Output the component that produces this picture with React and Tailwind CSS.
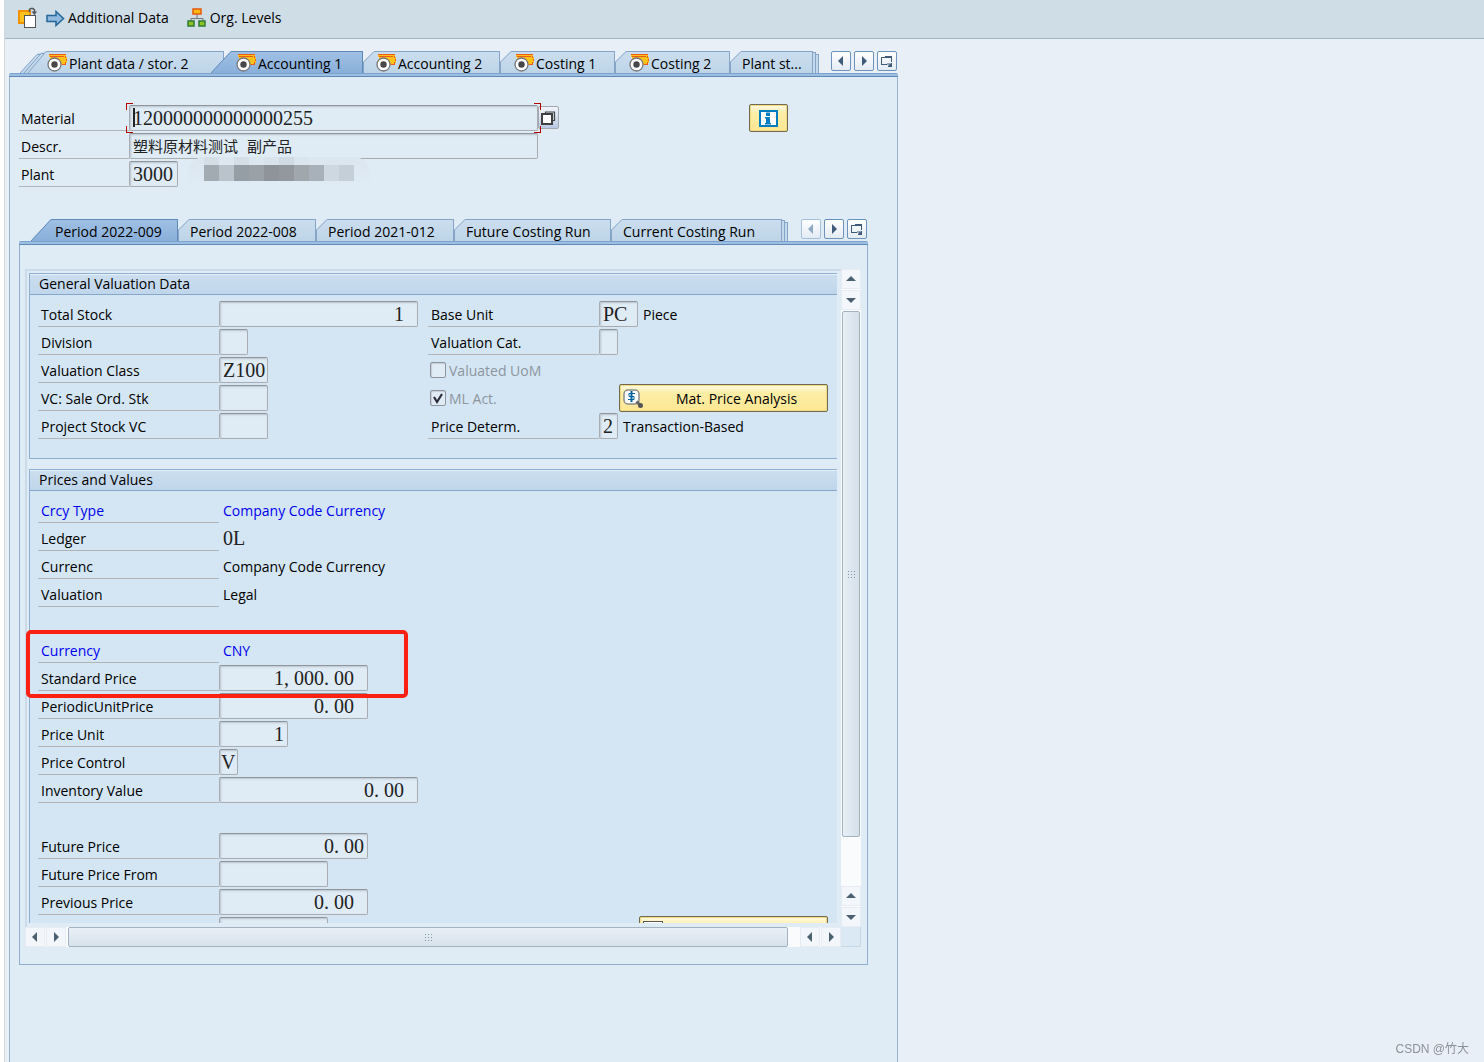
import React, { useState } from "react";

const cx = (...names) => names.filter(Boolean).join(" ");

// Icons

const CopyIcon = () => (
  <svg width="20" height="22" viewBox="0 0 20 22" fill="none">
    <rect x="1" y="4" width="11" height="12" fill="#fdc21a" stroke="#f39200" strokeWidth="2" />
    <rect x="6.500" y="8.500" width="11" height="12" fill="#fff" stroke="#555" />
    <path d="M11.500 5V2.500L13 1.500H15L16.500 3V5" stroke="#555" strokeWidth="1.500" />
    <path d="M13.500 4.500H19L16.500 8Z" fill="#555" />
  </svg>
);

const ArrowIcon = () => (
  <svg width="19" height="17" viewBox="0 0 19 17">
    <path
      d="M1 5.500H10V1.500L17.500 8.500L10 15.500V11.500H1Z"
      fill="#8fb9dd"
      stroke="#24679a"
      strokeWidth="1.500"
    />
  </svg>
);

const OrgIcon = () => (
  <svg width="20" height="20" viewBox="0 0 20 20" fill="none">
    <path d="M10 5V10M4 13V10.500H16V13" stroke="#777" />
    <rect x="6" y="1" width="8" height="5" fill="#fdb913" stroke="#e8590c" strokeWidth="1.500" />
    <rect x="1" y="13" width="6" height="5" fill="#8fc31f" stroke="#2d7a3a" strokeWidth="1.500" />
    <rect x="12" y="13" width="6" height="5" fill="#8fc31f" stroke="#2d7a3a" strokeWidth="1.500" />
  </svg>
);

const ViewIcon = () => (
  <svg width="22" height="19" viewBox="0 0 22 19" className="shrink-0">
    <path d="M2 1H19V4H20V6H19V8H20V10H19V12H8V6H3V4H2Z" fill="#fdc21a" />
    <path d="M2 1.500H19M3 3.500H17M18.500 3V5M19.500 6V8M18.500 9V12M15 11.500H19" stroke="#ea5b1c" fill="none" />
    <circle cx="7.500" cy="11.500" r="6.500" fill="#fff" stroke="#77777a" strokeWidth="1.300" />
    <circle cx="7.500" cy="11.500" r="3.200" fill="#47474a" />
  </svg>
);

const InfoIcon = () => (
  <svg width="19" height="17" viewBox="0 0 19 17">
    <rect x="1" y="1" width="17" height="15" fill="#fff" stroke="#007cc0" strokeWidth="2" />
    <path d="M7 2.500H11V6H7ZM6 7H11V13H12V14.500H6V13H7V8.500H6Z" fill="#007cc0" />
  </svg>
);

const MatchIcon = () => (
  <svg width="15" height="14" viewBox="0 0 15 14">
    <path d="M4.500 2.500V1H13.500V9.500H11.500" fill="#cfdde7" stroke="#444" strokeWidth="1.200" />
    <rect x="1" y="3" width="10" height="10" fill="#fff" stroke="#3f3f3f" strokeWidth="2" />
  </svg>
);

const PriceIcon = () => (
  <svg width="21" height="19" viewBox="0 0 21 19" fill="none">
    <rect x="1" y="1" width="15" height="14" rx="4" fill="#fff" stroke="#8a8a8a" strokeWidth="1.500" />
    <path d="M12 4.500H6V7.500H11V10.500H5" stroke="#00639c" />
    <path d="M8.500 2V13" stroke="#00639c" strokeWidth="2" />
    <path d="M13.500 12.500L18 17" stroke="#666" strokeWidth="3" />
    <circle cx="17.500" cy="16.500" r="2.500" fill="#555" />
  </svg>
);

const ARROWS = {
  left: "M7 0V10L2 5Z",
  right: "M3 0V10L8 5Z",
  up: "M0 7H10L5 2Z",
  down: "M0 3H10L5 8Z",
};

const Arrow = ({ dir }) => (
  <svg width="10" height="10" viewBox="0 0 10 10">
    <path d={ARROWS[dir]} fill="currentColor" />
  </svg>
);

const ListIcon = () => (
  <svg width="12" height="12" viewBox="0 0 12 12" fill="none">
    <path d="M0 2H4V1H11V7H10V3H1V9H6V10H0Z" fill="#3f5b7a" />
    <path d="M11 8V12H7V11L10 8Z" fill="#3f5b7a" />
    <path d="M6 9H9" stroke="#3f5b7a" />
  </svg>
);

// Tab strips

const SLANTS = {
  cut: { width: 11, fill: "M0 11L11 0V22H0Z", line: "M0.500 22V11L11 0.500" },
  full: { width: 21, fill: "M0 22L20 0H21V22Z", line: "M0 22L20 0.500H21" },
  first: { width: 27, fill: "M0 22L18 2L27 0V22Z", line: "M0 22L17 3.500H21M4 22L21 2.500H24M8 22L26 0.500H27" },
};

const Slant = ({ kind, active }) => {
  const slant = SLANTS[kind];
  return (
    <svg width={slant.width} height="22" viewBox={`0 0 ${slant.width} 22`} className="shrink-0">
      <defs>
        <linearGradient id={`slant-${kind}-${active ? "on" : "off"}`} x1="0" y1="0" x2="0" y2="1">
          <stop offset="0" stopColor={active ? "#a0c0e4" : "#cbdeef"} />
          <stop offset="1" stopColor={active ? "#89afd9" : "#bdd4e8"} />
        </linearGradient>
      </defs>
      <path d={slant.fill} fill={`url(#slant-${kind}-${active ? "on" : "off"})`} />
      <path d={slant.line} fill="none" stroke={active ? "#5f8ab8" : "#86a4c6"} />
    </svg>
  );
};

const Tab = ({ tab, active, onSelect }) => (
  <button
    role="tab"
    aria-selected={active}
    onClick={onSelect}
    className={cx("flex h-[22px] shrink-0 items-stretch", active && "z-10", tab.overlap)}
  >
    <Slant kind={tab.slant} active={active} />
    <span
      className={cx(
        "flex items-center whitespace-nowrap border-t border-r",
        active
          ? "border-[#5f8ab8] bg-linear-to-b from-[#a0c0e4] to-[#89afd9]"
          : "border-[#86a4c6] bg-linear-to-b from-[#cbdeef] to-[#bdd4e8]",
        tab.width
      )}
    >
      {tab.icon && <ViewIcon />}
      <span className="pt-[3px]">{tab.label}</span>
    </span>
  </button>
);

const NavButton = ({ label, disabled, children }) => (
  <button
    aria-label={label}
    disabled={disabled}
    className="flex size-5 items-center justify-center rounded-xs border border-[#6d93bd] bg-linear-to-b from-white to-[#e3ebf3] text-[#3f5b7a] disabled:border-[#a5c0dc] disabled:text-[#8fa9c4]"
  >
    {children}
  </button>
);

const TabStrip = ({ name, tabs, initial, prevDisabled, indent }) => {
  const [current, setCurrent] = useState(initial);
  return (
    <div className="flex h-[22px] items-start justify-between pr-px">
      <div role="tablist" aria-label={name} className={cx("flex", indent)}>
        {tabs.map((tab) => (
          <Tab
            key={tab.label}
            tab={tab}
            active={tab.label === current}
            onSelect={() => setCurrent(tab.label)}
          />
        ))}
        <span className="mt-px h-[21px] w-[3px] border-t border-r border-[#86a4c6] bg-[#c5d9ec]" />
        <span className="mt-[3px] h-[19px] w-[3px] border-t border-r border-[#86a4c6] bg-[#c5d9ec]" />
      </div>
      <div className="flex gap-[3px]">
        <NavButton label="Previous tab" disabled={prevDisabled}>
          <Arrow dir="left" />
        </NavButton>
        <NavButton label="Next tab">
          <Arrow dir="right" />
        </NavButton>
        <NavButton label="Tab list">
          <ListIcon />
        </NavButton>
      </div>
    </div>
  );
};

const StripLine = () => (
  <div className="h-1 rounded-t-xs border-t border-b border-t-[#7da3cc] border-b-[#5f8ab8] bg-[#9dbee3]" />
);

const VIEW_TABS = [
  { label: "Plant data / stor. 2", slant: "first", icon: true, width: "w-[177px]" },
  { label: "Accounting 1", slant: "full", icon: true, width: "w-[131px] pl-1", overlap: "-ml-[13px]" },
  { label: "Accounting 2", slant: "cut", icon: true, width: "w-[126px] pl-[2px]" },
  { label: "Costing 1", slant: "cut", icon: true, width: "w-[104px] pl-[3px]" },
  { label: "Costing 2", slant: "cut", icon: true, width: "w-[104px] pl-[3px]" },
  { label: "Plant st...", slant: "cut", width: "w-[72px] pl-px" },
];

const PERIOD_TABS = [
  { label: "Period 2022-009", slant: "full", width: "w-[126px] pl-[3px]" },
  { label: "Period 2022-008", slant: "cut", width: "w-[127px] pl-px" },
  { label: "Period 2021-012", slant: "cut", width: "w-[127px] pl-px" },
  { label: "Future Costing Run", slant: "cut", width: "w-[146px] pl-px" },
  { label: "Current Costing Run", slant: "cut", width: "w-[160px] pl-px" },
];

// Form parts

const Label = ({ htmlFor, width, children, blue }) => (
  <label
    htmlFor={htmlFor}
    className={cx(
      "h-[26px] shrink-0 border-b border-[#b1b5b8] pt-[2px] leading-6 whitespace-nowrap",
      width,
      blue && "text-[#0000f0]"
    )}
  >
    {children}
  </label>
);

const Field = ({ id, value = "", width, align = "pl-[3px]", font = "font-['Liberation_Serif',serif] text-xl" }) => (
  <input
    id={id}
    defaultValue={value}
    readOnly
    className={cx(
      "h-[26px] shrink-0 rounded-xs border border-[#a9adb1] border-t-[#8f959b] bg-[#dfebf5] leading-6 text-[#222] shadow-[inset_1px_1px_2px_#b9c4ce] outline-none",
      width,
      align,
      font
    )}
  />
);

const Row = ({ id, label, labelWidth = "w-[181px] pl-[3px]", blue, text, mono, after, ...field }) => (
  <div className="flex h-7">
    <Label htmlFor={id} width={labelWidth} blue={blue}>
      {label}
    </Label>
    {text ? (
      <output
        id={id}
        className={cx(
          "pl-1 whitespace-nowrap",
          mono ? "font-['Liberation_Serif',serif] text-xl leading-[26px] text-[#222]" : "pt-[2px] leading-6",
          blue && "text-[#0000f0]"
        )}
      >
        {text}
      </output>
    ) : (
      <Field id={id} {...field} />
    )}
    {after && <span className="pt-[2px] pl-[5px] leading-6 whitespace-nowrap">{after}</span>}
  </div>
);

const Check = ({ id, label, checked }) => (
  <div className="flex h-7 items-center gap-[3px] pb-[2px] pl-[2px]">
    <span className="relative flex size-4">
      <input
        id={id}
        type="checkbox"
        defaultChecked={checked}
        disabled
        className="size-4 appearance-none rounded-xs border border-[#8f959b] bg-[#dfebf5] shadow-[inset_1px_1px_1px_#c3ced8]"
      />
      {checked && (
        <svg viewBox="0 0 16 16" className="pointer-events-none absolute inset-0">
          <path d="M4 7L7 12L12 4" fill="none" stroke="#2b2b3b" strokeWidth="2.200" />
        </svg>
      )}
    </span>
    <label htmlFor={id} className="pt-[2px] text-[#8d959d]">
      {label}
    </label>
  </div>
);

const YELLOW =
  "rounded-xs border border-[#6f6a50] bg-linear-to-b from-[#fffbe6] via-[#fdeea6] via-30% to-[#fde793] shadow-[inset_0_0_0_1px_#f3da83]";

const Group = ({ title, children, className }) => (
  <fieldset className={cx("min-w-0 border-t border-l border-[#8fafd0] bg-[#d4e6f4]", className)}>
    <div className="h-[21px] border-t border-b border-t-[#e6f0f9] border-b-[#86a6ca] bg-linear-to-b from-[#cbdeef] to-[#c0d6eb] pl-[9px] leading-[18px]">
      {title}
    </div>
    <div className="flex pt-[6px] pl-2">{children}</div>
  </fieldset>
);

// Scrollbars

const ScrollButton = ({ dir }) => (
  <button
    aria-label={`Scroll ${dir}`}
    className="flex size-5 shrink-0 items-center justify-center border border-[#e6ecf2] bg-[#f3f7fb] text-[#4b6071]"
  >
    <Arrow dir={dir} />
  </button>
);

const Grip = () => (
  <span className="grid grid-cols-3 gap-[2px]">
    {[0, 1, 2, 3, 4, 5, 6, 7, 8].map((n) => (
      <span key={n} className="size-px bg-[#8796a3]" />
    ))}
  </span>
);

const VerticalScroll = () => (
  <div className="flex w-5 shrink-0 flex-col gap-px bg-[#fafbfc]">
    <ScrollButton dir="up" />
    <ScrollButton dir="down" />
    <div className="mx-px flex h-[526px] items-center justify-center rounded-xs border border-[#a3b2c0] bg-linear-to-r from-[#e8eff6] to-[#d3dfea]">
      <Grip />
    </div>
    <div className="flex-1" />
    <ScrollButton dir="up" />
    <ScrollButton dir="down" />
  </div>
);

const HorizontalScroll = () => (
  <div className="flex h-5">
    <div className="flex min-w-0 flex-1 gap-px bg-[#fafbfc]">
      <ScrollButton dir="left" />
      <ScrollButton dir="right" />
      <div className="ml-px flex flex-1 items-center justify-center rounded-xs border border-[#a3b2c0] bg-linear-to-b from-[#e8eff6] to-[#d7e2ec]">
        <Grip />
      </div>
      <div className="w-[10px]" />
      <ScrollButton dir="left" />
      <ScrollButton dir="right" />
    </div>
    <div className="w-5 border-r border-b border-[#c9d8e5] bg-[#dbe9f5]" />
  </div>
);

// Masked plant name
const MASK_TOP = ["bg-[#d3dee7]", "bg-[#dce7f0]", "bg-[#d3dee7]", "bg-[#dbe6ee]", "bg-[#d8e3eb]", "bg-[#cfdae2]", "bg-[#dae5ee]", "bg-[#dce7f0]", "bg-[#dbe6ef]", "bg-[#dbe6ef]"];
const MASK_MAIN = ["bg-[#a3abb2]", "bg-[#bac3cb]", "bg-[#969ea5]", "bg-[#9aa1a7]", "bg-[#8e9499]", "bg-[#92989d]", "bg-[#a0a8ae]", "bg-[#a8b1b9]", "bg-[#ced8e1]", "bg-[#c5cfd8]"];

const MaskedName = () => (
  <div className="ml-[10px] -mt-1 h-7 rounded-t-2xl bg-linear-to-b from-[#dbe6ef] to-[#dfebf5] px-4">
    <div className="flex">
      {MASK_TOP.map((tone, n) => (
        <span key={n} className={cx("h-2 w-[15px]", tone)} />
      ))}
    </div>
    <div className="flex">
      {MASK_MAIN.map((tone, n) => (
        <span key={n} className={cx("h-4 w-[15px]", tone)} />
      ))}
    </div>
  </div>
);

const HEAD = "w-[110px] pl-[2px]";

const Header = () => (
  <div className="flex pt-7 pl-[9px]">
    <div>
      <div className="flex">
        <div className="relative">
          <Row id="material" label="Material" labelWidth={HEAD} value="120000000000000255" width="w-[409px]" />
          {/* focus corners and caret */}
          <span className="absolute -top-[2px] left-[107px] h-[7px] w-[7px] border-t border-l border-t-[#b00000] border-l-[#b00000]" />
          <span className="absolute top-[21px] left-[107px] h-[7px] w-[7px] border-b border-l border-b-[#b00000] border-l-[#b00000]" />
          <span className="absolute -top-[2px] -right-[3px] z-10 h-[7px] w-[7px] border-t border-r border-t-[#b00000] border-r-[#b00000]" />
          <span className="absolute top-[21px] -right-[3px] z-10 h-[7px] w-[7px] border-r border-b border-r-[#b00000] border-b-[#b00000]" />
          <span className="absolute top-[3px] left-[114px] h-[19px] w-[2px] bg-[#222]" />
        </div>
        <button
          aria-label="Value help"
          className="mt-px flex h-[23px] w-[21px] items-center justify-center rounded-xs border border-[#a5a9ad] bg-linear-to-b from-[#f2f4fa] to-[#b9c9e4]"
        >
          <MatchIcon />
        </button>
      </div>
      <Row
        id="descr"
        label="Descr."
        labelWidth={HEAD}
        value="塑料原材料测试 副产品"
        width="w-[409px]"
        font="font-['Liberation_Mono','Noto_Sans_CJK_SC',monospace] text-[15px]"
      />
      <div className="flex h-7">
        <Row id="plant" label="Plant" labelWidth={HEAD} value="3000" width="w-[49px]" />
        <MaskedName />
      </div>
    </div>
    <button aria-label="Information" className={cx("-mt-px ml-[190px] flex h-7 w-[39px] items-center justify-center", YELLOW)}>
      <InfoIcon />
    </button>
  </div>
);

const SECOND = "w-[171px] pl-[3px]";
const AMOUNT = "pr-[13px] text-right";

const GeneralValuation = () => (
  <Group title="General Valuation Data" className="h-[186px] border-b">
    <div className="w-[390px] shrink-0">
      <Row id="stock" label="Total Stock" value="1" width="w-[199px]" align={AMOUNT} />
      <Row id="division" label="Division" width="w-[29px]" />
      <Row id="vclass" label="Valuation Class" value="Z100" width="w-[49px]" />
      <Row id="vcsale" label="VC: Sale Ord. Stk" width="w-[49px]" />
      <Row id="vcproject" label="Project Stock VC" width="w-[49px]" />
    </div>
    <div className="flex-1 pr-[9px]">
      <Row id="unit" label="Base Unit" labelWidth={SECOND} value="PC" width="w-[39px]" after="Piece" />
      <Row id="vcat" label="Valuation Cat." labelWidth={SECOND} width="w-[19px]" />
      <Check id="uom" label="Valuated UoM" />
      <div className="flex h-7 justify-between">
        <Check id="ml" label="ML Act." checked />
        <button className={cx("-mt-px flex h-7 w-[209px] items-center pl-[3px]", YELLOW)}>
          <PriceIcon />
          <span className="flex-1 pt-[2px] pl-8 text-left">Mat. Price Analysis</span>
        </button>
      </div>
      <Row id="determ" label="Price Determ." labelWidth={SECOND} value="2" width="w-[19px]" after="Transaction-Based" />
    </div>
  </Group>
);

const PricesAndValues = () => (
  <Group title="Prices and Values" className="mt-[10px]">
    <div className="flex-1">
      <Row id="crcytype" label="Crcy Type" text="Company Code Currency" blue />
      <Row id="ledger" label="Ledger" text="0L" mono />
      <Row id="currenc" label="Currenc" text="Company Code Currency" />
      <Row id="valuation" label="Valuation" text="Legal" />
      <div className="h-7" />
      <div className="relative">
        <Row id="currency" label="Currency" text="CNY" blue />
        <Row id="standard" label="Standard Price" value="1, 000. 00" width="w-[149px]" align={AMOUNT} />
        {/* marker round the standard price */}
        <span className="pointer-events-none absolute -top-[7px] -left-3 z-10 h-[68px] w-[382px] rounded-[5px] border-4 border-[#fb2012]" />
      </div>
      <Row id="periodic" label="PeriodicUnitPrice" value="0. 00" width="w-[149px]" align={AMOUNT} />
      <Row id="punit" label="Price Unit" value="1" width="w-[69px]" align="pr-[3px] text-right" />
      <Row id="pcontrol" label="Price Control" value="V" width="w-[19px]" align="pl-px" />
      <Row id="inventory" label="Inventory Value" value="0. 00" width="w-[199px]" align={AMOUNT} />
      <div className="h-7" />
      <Row id="future" label="Future Price" value="0. 00" width="w-[149px]" align="pr-[3px] text-right" />
      <Row id="futurefrom" label="Future Price From" width="w-[109px]" />
      <Row id="previous" label="Previous Price" value="0. 00" width="w-[149px]" align={AMOUNT} />
      <div className="flex justify-between pr-[9px]">
        <div className="pl-[181px]">
          <Field id="lastchange" width="w-[109px]" />
        </div>
        <button aria-label="Price change" className={cx("-mt-px flex h-7 w-[189px] items-start pt-1 pl-[3px]", YELLOW)}>
          <span className="block h-4 w-5 border border-[#555] bg-white" />
        </button>
      </div>
    </div>
  </Group>
);

const App = () => {
  return (
    <div className="flex min-h-screen bg-[#e9eff7] font-['Open_Sans',sans-serif] text-sm leading-5 text-black">
      <div className="w-[5px] shrink-0 border-r border-[#cfd8e3] bg-white" />
      <div className="flex min-w-0 flex-1 flex-col">
        <header className="flex h-[39px] items-center border-b border-[#a3b6c8] bg-[#cfdde7] pb-[2px] pl-[13px]">
          <button aria-label="Other material">
            <CopyIcon />
          </button>
          <button className="ml-2 flex items-center gap-[3px]">
            <ArrowIcon />
            Additional Data
          </button>
          <button className="ml-[18px] flex items-center gap-[3px]">
            <OrgIcon />
            Org. Levels
          </button>
        </header>

        <main className="flex w-full max-w-[893px] flex-1 flex-col pt-3 pl-1">
          <TabStrip name="Views" tabs={VIEW_TABS} initial="Accounting 1" indent="pl-[11px]" />
          <StripLine />
          <div className="flex-1 border-x border-[#9ab3cf] bg-[#dfebf5]">
            <Header />

            <div className="mt-[30px] mr-[29px] ml-[9px]">
              <TabStrip name="Periods" tabs={PERIOD_TABS} initial="Period 2022-009" indent="pl-3" prevDisabled />
              <StripLine />
              <div className="border-x border-b border-[#8fafd0] pt-6 pr-[6px] pb-[17px] pl-[5px]">
                <div className="flex h-[658px]">
                  <div className="min-w-0 flex-1 border-t-2 border-l-2 border-[#cbdae8] bg-[#dfebf5] pt-[2px] pr-1 pl-[2px]">
                    {/* the marker reaches past the groups, so clip only downwards */}
                    <div className="h-[650px] overflow-y-clip">
                      <GeneralValuation />
                      <PricesAndValues />
                    </div>
                  </div>
                  <VerticalScroll />
                </div>
                <HorizontalScroll />
              </div>
            </div>
          </div>
        </main>
      </div>
      <footer className="fixed right-[15px] bottom-[5px] font-['Liberation_Sans','Noto_Sans_CJK_SC',sans-serif] text-xs text-[#8c9299]">
        CSDN @竹大
      </footer>
    </div>
  );
};

export default App;
